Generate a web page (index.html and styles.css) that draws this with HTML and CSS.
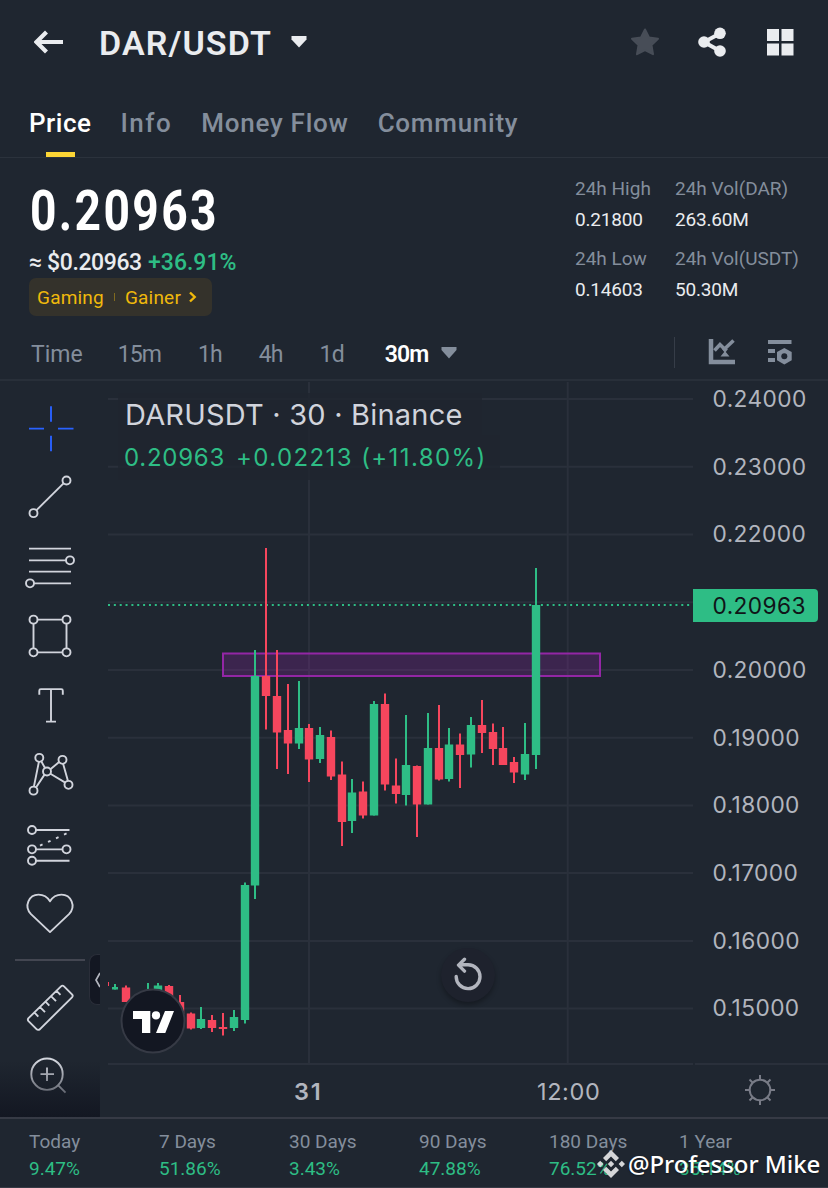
FILE: index.html
```
<!DOCTYPE html>
<html lang="en">
<head>
  <meta charset="UTF-8">
  <meta name="viewport" content="width=device-width,initial-scale=1">
  <title>DAR/USDT</title>
  <link rel="stylesheet" href="styles.css">
</head>
<body>
  <header class="header">
    <svg class="back" width="30" height="26" viewBox="0 0 30 26"><path d="M12.500 3 2.500 13l10 10M3 13h26" fill="none" stroke="#eaecef" stroke-width="4.200"/></svg>
    <h1 class="pair">DAR/USDT</h1>
    <svg class="caret" width="16" height="12" viewBox="0 0 16 12"><path d="M.5 0h15v3.500L8 11.500.5 3.500z" fill="#eaecef"/></svg>
    <div class="actions">
      <svg width="30" height="30" viewBox="0 0 30 30"><path d="m15 2.500 4 8 9 1.300-6.500 6.300 1.500 9.100-8-4-8 4 1.500-9.100L2 11.800l9-1.300z" fill="#474d57" stroke="#474d57" stroke-width="2" stroke-linejoin="round"/></svg>
      <svg width="30" height="30" viewBox="0 0 30 30"><path d="M23 6.500 7 15l16 9" fill="none" stroke="#eaecef" stroke-width="4"/><g fill="#eaecef"><circle cx="23" cy="6.300" r="5.800"/><circle cx="7" cy="15" r="5.800"/><circle cx="23" cy="24" r="5.800"/></g></svg>
      <svg width="30" height="30" viewBox="0 0 30 30"><path d="M2 2h12v12H2zM16.500 2h12v12h-12zM2 16.500h12v12H2zM16.500 16.500h12v12h-12z" fill="#eaecef"/></svg>
    </div>
  </header>

  <nav class="tabs">
    <a class="tab selected">Price</a>
    <a class="tab info">Info</a>
    <a class="tab">Money Flow</a>
    <a class="tab">Community</a>
  </nav>

  <section class="summary">
    <div class="quote">
      <div class="last">0.20963</div>
      <div class="fiat">≈ $0.20963 <span class="up">+36.91%</span></div>
      <div class="tags">
        <span>Gaming</span><i class="tagline"></i><span>Gainer</span>
        <svg width="8" height="12" viewBox="0 0 8 12"><path d="m1 1.500 4.700 4.500L1 10.500" fill="none" stroke="#f0b90b" stroke-width="2.400"/></svg>
      </div>
    </div>
    <dl class="stats">
      <div><dt>24h High</dt><dd>0.21800</dd></div>
      <div><dt>24h Vol(DAR)</dt><dd>263.60M</dd></div>
      <div><dt>24h Low</dt><dd>0.14603</dd></div>
      <div><dt>24h Vol(USDT)</dt><dd>50.30M</dd></div>
    </dl>
  </section>

  <nav class="intervals">
    <a class="time">Time</a><a>15m</a><a>1h</a><a>4h</a><a>1d</a><a class="selected">30m</a>
    <svg class="icaret" width="16" height="12" viewBox="0 0 16 12"><path d="M.5 0h15v3L8 11.500.5 3z" fill="#848e9c"/></svg>
    <div class="charttools">
      <svg width="28" height="28" viewBox="0 0 28 28"><path d="M3 1v23h24" fill="none" stroke="#848e9c" stroke-width="4.500"/><path d="m6.500 12.500 5.500-6 4.500 4.500 9-8.500" fill="none" stroke="#848e9c" stroke-width="3.600"/><path d="M12.500 18.500 17 13l4.500 5.500zM14 11h6l-3 4z" fill="#848e9c"/></svg>
      <svg width="26" height="28" viewBox="0 0 26 28"><path d="M1 4h23.500M1 13h7M1 22h7" stroke="#848e9c" stroke-width="4"/><path d="m17.300 10 7.400 4v8.300l-7.400 4.200-7.300-4.200V14z" fill="#848e9c"/><circle cx="17.300" cy="18.200" r="3" fill="#1f2630"/></svg>
    </div>
  </nav>

  <main class="chart">
    <aside class="toolbar">
      <svg class="tool" viewBox="0 0 100 69"><path class="cross" d="M51 12v15.500M51 41.500V57M29 34.500h15M58 34.500h15.500"/></svg>
      <svg class="tool" viewBox="0 0 100 69"><path d="m36.500 47 27-26.700"/><circle cx="33.500" cy="50" r="4"/><circle cx="66.500" cy="17.400" r="4"/></svg>
      <svg class="tool" viewBox="0 0 100 69"><path d="M29 15.500h42M29 27.200h37M29 38.500h42M34 50.200h37"/><circle cx="70" cy="27.200" r="4"/><circle cx="30" cy="50.200" r="4"/></svg>
      <svg class="tool" viewBox="0 0 100 69"><path d="M37.500 17.500h25M37.500 50.200h25M33.500 21.500v25M66.500 21.500v25"/><circle cx="33.500" cy="17.500" r="4"/><circle cx="66.500" cy="17.500" r="4"/><circle cx="33.500" cy="50.200" r="4"/><circle cx="66.500" cy="50.200" r="4"/></svg>
      <svg class="tool" viewBox="0 0 100 69"><path d="M39.300 23.500v-4q0-1.500 1.500-1.500h20.500q1.500 0 1.500 1.500v4M51 18v32.500M46 50.500h10"/></svg>
      <svg class="tool" viewBox="0 0 100 69"><path d="m38.900 21.700-5 24.800M41.300 21.200l3.700 6.700M50.400 29.200l8.700-7.300M63.100 23.700l4.800 17M50.400 33.600l14.900 8.900M44.500 34.500l-8.500 12.900"/><circle cx="39.300" cy="17.700" r="4"/><circle cx="62.500" cy="19.700" r="4"/><circle cx="47" cy="31.400" r="4"/><circle cx="68.500" cy="44.700" r="4"/><circle cx="33.500" cy="50.500" r="4"/></svg>
      <svg class="tool" viewBox="0 0 100 69"><path d="M36 19.800h33.500M36 39.200h26.500M36 50.600h33.500"/><path d="m40 35.500 28-12.800" stroke-dasharray="2.800 6"/><circle cx="32" cy="19.800" r="4"/><circle cx="32" cy="39.200" r="4"/><circle cx="66.500" cy="39.200" r="4"/><circle cx="32" cy="50.600" r="4"/></svg>
      <svg class="tool" viewBox="0 0 100 69"><path d="M50 53 31 35C23.500 27 29 15.500 38.500 15.500c5.500 0 9 2.500 11.500 6.700 2.500-4.200 6-6.700 11.500-6.700C71 15.500 76.500 27 69 35z" stroke-linejoin="round"/></svg>
      <hr class="rule">
      <svg class="tool" viewBox="0 0 100 69"><path d="M61 13.200q1.500-1.400 3 0l8 8q1.400 1.500 0 3L40 56q-2 1.500-3.500 0L28.500 48q-1.300-1.500 0-3zM34.500 39.500l3.800 4M40 34l5 5M45.500 28.500l3.800 4M51 23l5 5M56.500 17.800l4 4" stroke-linejoin="round"/></svg>
      <svg class="tool" viewBox="0 0 100 69"><circle cx="47" cy="32" r="15.700"/><path d="M40.500 32h13.500M47 25.300v13.500M58 43l7.500 7.500"/></svg>
      <div class="shade"></div>
      <div class="collapse"><svg width="6" height="18" viewBox="0 0 6 18"><path d="M6 2 2 9l4 7" fill="none" stroke="#b2b5be" stroke-width="1.700"/></svg></div>
    </aside>

    <div class="plotarea">
      <svg id="plot" class="plot" viewBox="100 381 593 684"></svg>
      <div class="legend">
        <div class="symbol">DARUSDT · 30 · Binance</div>
        <div class="change"><span>0.20963</span><span class="diff">+0.02213 (+11.80%)</span></div>
      </div>
      <svg class="tvlogo" width="66" height="66" viewBox="120 988 66 66"><circle cx="153" cy="1021" r="31.500" fill="#131722" stroke="#363a45" stroke-width="2"/><path d="M133 1011h17.300v22H142v-14h-9zM165 1011h9l-8.700 22H156z" fill="#fff"/><circle cx="156" cy="1015.300" r="4.100" fill="#fff"/></svg>
      <div class="reset"><svg width="30" height="36" viewBox="453 957 30 36"><path d="M456.200 976.500a11.900 11.900 0 1 0 11.900-11.700h-8M464.500 959.200l-6 5.900 6 6" fill="none" stroke="#b2b5be" stroke-width="3.400" stroke-linecap="round" stroke-linejoin="round"/></svg></div>
      <div class="times"><b>31</b><span>12:00</span></div>
    </div>

    <div class="axis">
      <div class="prices">
        <span>0.24000</span><span>0.23000</span><span>0.22000</span><span></span><span>0.20000</span>
        <span>0.19000</span><span>0.18000</span><span>0.17000</span><span>0.16000</span><span>0.15000</span>
      </div>
      <div class="current">0.20963</div>
      <div class="corner"><svg width="30" height="30" viewBox="0 0 30 30"><circle cx="15" cy="15" r="10.300"/><path d="M15 0v4.500M15 25.500V30M0 15h4.500M25.500 15H30M4.500 4.500l3 3M22.500 22.500l3 3M4.500 25.500l3-3M22.500 7.500l3-3"/></svg></div>
    </div>
  </main>

  <footer class="periods">
    <div><span>Today</span><b>9.47%</b></div>
    <div><span>7 Days</span><b>51.86%</b></div>
    <div><span>30 Days</span><b>3.43%</b></div>
    <div><span>90 Days</span><b>47.88%</b></div>
    <div><span>180 Days</span><b>76.52%</b></div>
    <div><span>1 Year</span><b>35.14%</b></div>
    <div class="credit">
      <svg width="28" height="28" viewBox="0 0 28 28"><path d="m14 0 8 8-3.200 3.200L14 6.400l-4.800 4.800L6 8zM14 28l8-8-3.200-3.200-4.800 4.800-4.800-4.800L6 20zM14 10.800l3.200 3.200-3.200 3.200-3.200-3.200zM3.200 10.800 6.400 14l-3.200 3.200L0 14zM24.800 10.800 28 14l-3.200 3.200-3.200-3.200z" fill="#d5d6d8"/></svg>
      <span>@Professor Mike</span>
    </div>
  </footer>

  <script>
// x, high, body top, body bottom, low, direction
const candles = [
  [115, 984, 987, 989.5, 989.5, 1],
  [126, 985.5, 987.5, 1002, 1002, 0],
  [137, 996, 998, 1004, 1006, 1],
  [148, 983, 992, 1002, 1004, 1],
  [158, 983, 985.5, 996, 998, 1],
  [169, 985, 986, 998, 1000, 0],
  [180, 995, 1002, 1014, 1016, 0],
  [191, 1012.5, 1013.5, 1028.5, 1029.5, 0],
  [201, 1007, 1019, 1028, 1029, 1],
  [212, 1015, 1020, 1028, 1032, 0],
  [223, 1013, 1027, 1029, 1035.5, 0],
  [234, 1010, 1017, 1028, 1031, 1],
  [245, 882.5, 885, 1020, 1023.5, 1],
  [255, 650, 676, 885.5, 899, 1],
  [266, 548, 676, 696, 729.5, 0],
  [277, 650, 696, 732.5, 769, 0],
  [288, 684, 730, 743.5, 774, 0],
  [299, 681, 728, 743.5, 749, 1],
  [309, 724, 728, 759.5, 782, 0],
  [320, 727, 735, 759, 763, 1],
  [331, 730.5, 737, 776.5, 780, 0],
  [342, 761.5, 774.5, 822, 846, 0],
  [352, 779, 792.5, 821, 833, 1],
  [363, 781.5, 791.5, 815.5, 818.5, 0],
  [374, 701, 704, 815.5, 815.5, 1],
  [385, 693.5, 704, 784.5, 790.5, 0],
  [396, 758.5, 785.5, 794, 803.5, 0],
  [406, 715, 765, 795, 805.5, 1],
  [417, 765.5, 766, 804.5, 837, 0],
  [428, 713, 748, 804.5, 804.5, 1],
  [439, 705, 748, 779.5, 780.5, 0],
  [449, 728, 744.5, 779, 781.5, 1],
  [460, 733.5, 744.5, 755, 788, 0],
  [471, 717, 725, 754.5, 767.5, 1],
  [482, 700, 725, 733, 753, 0],
  [493, 723.5, 732, 749, 765, 0],
  [503, 727, 748, 765, 765, 0],
  [514, 757, 762, 772.5, 783, 0],
  [525, 723, 754, 774.5, 780, 1],
  [536, 568, 605, 755, 769, 1]
];

let grid = "";
let bars = "";

// グリッド線
for (let i = 0; i < 10; i++) {
  grid += `<path class="grid" d="M108 ${(399.1 + 67.72 * i).toFixed(1)}H693"/>`;
}
grid += `<path class="grid" d="M309 382V1064M567.700 382V1064M108 1064H693"/>`;

for (const [x, high, top, bottom, low, up] of candles) {
  const half = x === 115 ? 3 : 4.2;
  bars += `<g class="${up ? "rise" : "fall"}">
    <rect x="${x - 1}" y="${high}" width="2" height="${low - high}"/>
    <rect x="${x - half}" y="${top}" width="${half * 2}" height="${bottom - top}"/></g>`;
}

document.getElementById("plot").innerHTML = grid
  + `<rect class="zone" x="223" y="653.500" width="377" height="22.500"/>`
  + `<path class="lastline" d="M108 605H693"/>`
  + `<rect class="fall" x="108" y="982" width="1" height="4"/>`
  + bars;
  </script>
</body>
</html>
```
FILE: styles.css
```
* {
  box-sizing: border-box;
}

body {
  margin: 0;
  width: 828px;
  height: 1188px;
  overflow: hidden;
  background: #1f2630;
  color: #eaecef;
  font-family: Roboto, "Liberation Sans", sans-serif;
  white-space: nowrap;
}

svg {
  display: block;
  flex: none;
}

/*header*/

.header {
  display: flex;
  align-items: center;
  height: 84px;
  padding: 0 33px 0 34px;
}

.pair {
  width: 172px;
  margin: 2px 20px 0 35px;
  font-size: 34px;
  font-weight: 600;
  letter-spacing: 1.100px;
}

.actions {
  display: flex;
  gap: 37px;
  margin-left: auto;
}

.actions svg:last-child {
  margin-left: 1px;
}

.tabs {
  display: flex;
  gap: 29px;
  height: 74px;
  padding: 0 29px;
  border-bottom: 1px solid #2b323c;
  color: #848e9c;
  font-size: 26px;
  font-weight: 500;
  line-height: 78px;
  letter-spacing: .75px;
}

.tab.selected {
  color: #fff;
  letter-spacing: .5px;
  background: linear-gradient(#fcd535, #fcd535) center bottom / 29px 5px no-repeat;
}

.tab.info {
  letter-spacing: 1.500px;
}

/*price summary*/

.summary {
  display: flex;
  justify-content: space-between;
  height: 167px;
  padding: 0 28px 0 29px;
}

.last {
  width: max-content;
  margin-top: 21px;
  font-size: 55px;
  font-weight: 700;
  line-height: 64px;
  letter-spacing: 2.800px;
  color: #fff;
  transform: translateX(1px) scaleX(.84);
  transform-origin: left;
}

.fiat {
  margin-top: 6px;
  font-size: 23px;
  font-weight: 500;
  line-height: 28px;
  letter-spacing: -.4px;
}

.up {
  margin-left: 1px;
  color: #2ebd85;
  letter-spacing: 0;
}

.tags {
  display: flex;
  align-items: center;
  width: 183px;
  height: 38px;
  margin-top: 1px;
  padding: 0 8px;
  border-radius: 7px;
  background: #34322b;
  color: #f0b90b;
  font-size: 19px;
  letter-spacing: .2px;
}

.tagline {
  width: 1px;
  height: 8px;
  margin: 0 10px;
  background: #806a1f;
}

.tags svg {
  margin-left: 8px;
}

.stats {
  display: grid;
  grid-template-columns: 100px 125px;
  grid-auto-rows: 69.500px;
  margin: 15px 0 0;
  font-size: 19px;
  line-height: 31px;
}

.stats dt {
  color: #848e9c;
}

.stats dd {
  margin: 0;
  letter-spacing: -.2px;
}

/*intervals*/

.intervals {
  display: flex;
  align-items: center;
  height: 56px;
  padding: 0 35px 0 31px;
  border-bottom: 2px solid #282f39;
  color: #848e9c;
  font-size: 23px;
}

.intervals a {
  margin: 4px 37px 0 0;
  letter-spacing: -.9px;
}

.intervals .time {
  margin-right: 35px;
  letter-spacing: 0;
}

.intervals .selected {
  margin-left: 4px;
  margin-right: 13px;
  color: #fff;
  font-weight: 600;
}

.icaret {
  margin-top: 1px;
}

.charttools {
  display: flex;
  align-items: center;
  gap: 31px;
  height: 31px;
  margin-left: auto;
  padding-left: 33px;
  border-left: 1px solid #363d48;
}

/*chart*/

.chart {
  display: flex;
  height: 736px;
}

.toolbar {
  position: relative;
  width: 100px;
  padding-top: 13px;
  flex: none;
}

.tool {
  width: 100px;
  height: 69.250px;
  fill: none;
  stroke: #d1d4dc;
  stroke-width: 1.900;
}

.cross {
  stroke: #2962ff;
}

.rule {
  width: 70px;
  height: 2px;
  margin: 11px 15px 12px;
  border: 0;
  background: #434651;
}

.shade {
  position: absolute;
  left: 0;
  right: 0;
  bottom: 0;
  height: 56px;
  background: linear-gradient(rgba(19, 23, 34, 0), #131722);
}

.collapse {
  position: absolute;
  right: 0;
  top: 573px;
  display: flex;
  align-items: center;
  justify-content: flex-end;
  width: 11px;
  height: 51px;
  border: 1px solid #2a2e39;
  border-right: 0;
  border-radius: 8px 0 0 8px;
  background: #131722;
}

.plotarea {
  position: relative;
  width: 593px;
  font-family: Inter, "Liberation Sans", sans-serif;
}

.plot {
  width: 593px;
  height: 684px;
}

.grid {
  fill: none;
  stroke: #2a303b;
  stroke-width: 2;
}

.rise {
  fill: #2ebd85;
}

.fall {
  fill: #f6465d;
}

.zone {
  fill: rgba(156, 39, 176, .24);
  stroke: #9326a5;
  stroke-width: 2;
}

.lastline {
  stroke: #2ebd85;
  stroke-width: 2;
  stroke-dasharray: 2 3.850;
}

.legend {
  position: absolute;
  left: 18px;
  top: 12px;
}

.legend div {
  width: max-content;
  background: rgba(31, 38, 48, .8);
}

.symbol {
  height: 42px;
  padding: 0 19px 0 7px;
  font-size: 29px;
  line-height: 43px;
  letter-spacing: .2px;
  color: #d1d4dc;
}

.change {
  display: flex;
  gap: 11px;
  padding: 0 13px 0 6px;
  font-size: 24px;
  line-height: 45px;
  letter-spacing: .75px;
  color: #2ebd85;
}

.diff {
  letter-spacing: 1.400px;
}

.tvlogo {
  position: absolute;
  left: 20px;
  top: 607px;
}

.reset {
  position: absolute;
  left: 341px;
  top: 567px;
  display: flex;
  align-items: center;
  justify-content: center;
  width: 54px;
  height: 54px;
  border-radius: 50%;
  background: #1e222d;
  box-shadow: 0 3px 5px rgba(0, 0, 0, .3);
}

.times {
  display: flex;
  height: 52px;
  color: #b2b5be;
  font-size: 23.500px;
  line-height: 54px;
  letter-spacing: .6px;
}

.times b {
  width: 242px;
  padding-left: 194px;
  font-weight: 600;
  letter-spacing: 1.800px;
}

.times span {
  margin-left: 195px;
}

.axis {
  position: relative;
  flex: 1;
  color: #b2b5be;
  font-family: Inter, "Liberation Sans", sans-serif;
  font-size: 22.700px;
  letter-spacing: .4px;
}

.prices {
  display: flex;
  flex-direction: column;
  height: 682px;
  padding-left: 19.500px;
}

.prices span {
  height: 67.720px;
  line-height: 36px;
}

.current {
  position: absolute;
  left: 0;
  top: 208px;
  width: 125px;
  height: 33px;
  padding-left: 19.500px;
  border-radius: 0 4px 4px 0;
  background: #2ebd85;
  color: #101418;
  line-height: 33px;
}

.corner {
  height: 54px;
  margin-left: 2px;
  padding: 10px 0 0 50px;
  border-top: 2px solid #2a303b;
}

.corner svg {
  fill: none;
  stroke: #787b86;
  stroke-width: 2;
}

/*performance*/

.periods {
  position: relative;
  display: grid;
  grid-template-columns: repeat(6, 130px);
  height: 71px;
  padding: 9px 0 0 29px;
  border-top: 2px solid #363a45;
  border-bottom: 1px solid #363a45;
  font-size: 19px;
  line-height: 27px;
}

.periods span,
.periods b {
  display: block;
  font-weight: 400;
}

.periods span {
  color: #848e9c;
}

.periods b {
  color: #2ebd85;
}

.credit {
  position: absolute;
  left: 597px;
  bottom: 5px;
  display: flex;
  align-items: center;
  gap: 3px;
  height: 36px;
}

.periods .credit span {
  margin-top: -2px;
  color: #fff;
  font-family: "Noto Sans", sans-serif;
  font-size: 24px;
  font-weight: 500;
  letter-spacing: -.05px;
  text-shadow: 0 1px 2px rgba(0, 0, 0, .4);
}
```
